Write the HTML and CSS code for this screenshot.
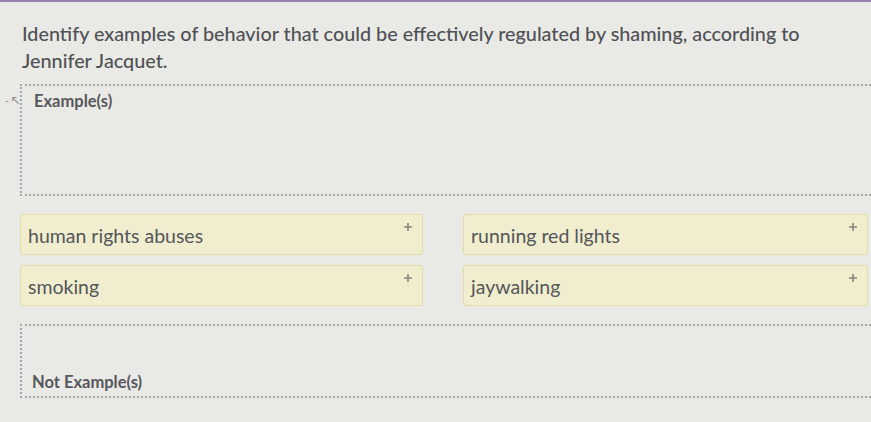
FILE: index.html
```html
<!DOCTYPE html>
<html>
<head>
<meta charset="utf-8">
<link rel="stylesheet" href="styles.css">
</head>
<body>
<div class="page">
  <div class="topline"></div>
  <h1 class="prompt">Identify examples of behavior that could be effectively regulated by shaming, according to Jennifer Jacquet.</h1>
  <div class="zone zone-example">
    <span class="marker">- ↖</span>
    <div class="zone-label">Example(s)</div>
  </div>
  <div class="cards">
    <div class="card"><span>human rights abuses</span><svg class="plus" viewBox="0 0 10 10" width="10" height="10"><path d="M5 1v8M1 5h8" stroke="#85857c" stroke-width="1.6"/></svg></div>
    <div class="card"><span>running red lights</span><svg class="plus" viewBox="0 0 10 10" width="10" height="10"><path d="M5 1v8M1 5h8" stroke="#85857c" stroke-width="1.6"/></svg></div>
    <div class="card"><span>smoking</span><svg class="plus" viewBox="0 0 10 10" width="10" height="10"><path d="M5 1v8M1 5h8" stroke="#85857c" stroke-width="1.6"/></svg></div>
    <div class="card"><span>jaywalking</span><svg class="plus" viewBox="0 0 10 10" width="10" height="10"><path d="M5 1v8M1 5h8" stroke="#85857c" stroke-width="1.6"/></svg></div>
  </div>
  <div class="zone zone-not">
    <div class="zone-label">Not Example(s)</div>
  </div>
</div>
</body>
</html>
```
FILE: styles.css
```css
html, body {
  margin: 0;
  padding: 0;
  background: #e9e9e5;
}
.page {
  width: 871px;
  height: 422px;
  overflow: hidden;
  font-family: "Lato", "Open Sans", sans-serif;
  color: #55565a;
  display: flex;
  flex-direction: column;
}
.topline {
  height: 2px;
  background: #9b7fb0;
}
.prompt {
  margin: 18px 40px 0 22px;
  font-size: 19.8px;
  font-weight: 500;
  line-height: 27px;
  color: #505156;
}
.zone {
  position: relative;
  margin: 10px -12px 0 20px;
  border: 2px dotted #a3a6ae;
  border-right: none;
  box-sizing: border-box;
}
.zone-example {
  height: 112px;
  padding: 5px 0 0 12px;
}
.marker {
  position: absolute;
  left: -17px;
  top: 8px;
  font-size: 10px;
  color: #777;
}
.zone-label {
  font-size: 16.5px;
  font-weight: 700;
  color: #56575c;
}
.cards {
  display: grid;
  grid-template-columns: 403px 405px;
  column-gap: 40px;
  row-gap: 10px;
  margin: 18px 0 0 20px;
}
.card {
  height: 41px;
  box-sizing: border-box;
  background: #f0eecf;
  border: 1px solid #e3dca6;
  border-radius: 3px;
  display: flex;
  align-items: center;
  justify-content: space-between;
  padding: 0 9px 0 7px;
  font-size: 19.5px;
  color: #55565a;
}
.card span {
  margin-top: 2px;
}
.plus {
  align-self: flex-start;
  margin-top: 7px;
}
.zone-not {
  margin-top: 18px;
  height: 74px;
  display: flex;
  align-items: flex-end;
  padding: 0 0 4px 10px;
}
```
